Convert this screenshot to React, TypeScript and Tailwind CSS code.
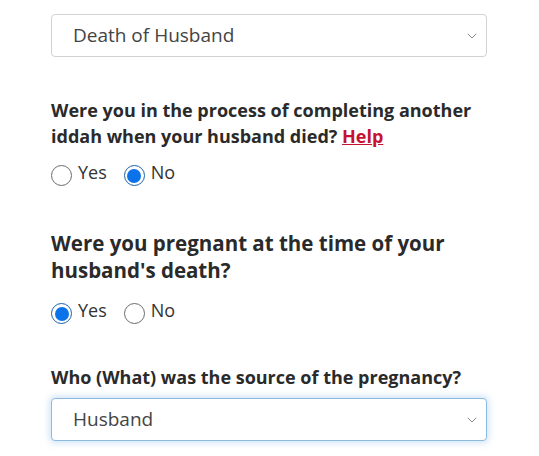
import { ChevronDown } from "lucide-react";

function Select({ value, focused }: { value: string; focused?: boolean }) {
  return (
    <div
      className={`flex h-[43px] w-[436px] items-center justify-between rounded-[4px] border bg-white pl-[21px] pr-[6px] ${
        focused
          ? "border-[#8dbbe0] shadow-[0_0_6px_2px_rgba(120,180,230,0.35)]"
          : "border-[#d2d2d2]"
      }`}
    >
      <span className="text-[19px] text-[#444]">{value}</span>
      <ChevronDown size={16} strokeWidth={1.3} className="text-[#777]" />
    </div>
  );
}

function Radio({ label, checked }: { label: string; checked?: boolean }) {
  return (
    <label className="flex items-start gap-[6px]">
      {checked ? (
        <span className="mt-[5px] flex h-[21px] w-[21px] items-center justify-center rounded-full border-[1.5px] border-[#1d5fa8] bg-white">
          <span className="h-[14px] w-[14px] rounded-full bg-[#0c72ea]" />
        </span>
      ) : (
        <span className="mt-[5px] h-[21px] w-[21px] rounded-full border border-[#6b6b6b] bg-white" />
      )}
      <span className="text-[18px] leading-6 text-[#333]">{label}</span>
    </label>
  );
}

export default function App() {
  return (
    <div className="h-[456px] w-[539px] overflow-hidden bg-white font-['Open_Sans',sans-serif]">
      <div className="flex flex-col pl-[51px]">
        <div className="-mt-[22px] text-[18px] font-bold leading-[26px] text-[#2a2a2a]">
          Reason for iddah
        </div>
        <div className="mt-[10px]">
          <Select value="Death of Husband" />
        </div>

        <p className="mt-[40px] w-[440px] text-[18px] font-bold leading-[26px] text-[#2a2a2a]">
          Were you in the process of completing another iddah when your husband died?{" "}
          <a className="text-[#c41230] underline">Help</a>
        </p>
        <div className="mt-[11px] flex gap-[17px]">
          <Radio label="Yes" />
          <Radio label="No" checked />
        </div>

        <p className="mt-[44px] w-[440px] text-[20.5px] font-bold leading-[27px] text-[#2a2a2a]">
          Were you pregnant at the time of your husband's death?
        </p>
        <div className="mt-[14px] flex gap-[17px]">
          <Radio label="Yes" checked />
          <Radio label="No" />
        </div>

        <p className="mt-[40px] text-[18px] font-bold leading-[26px] text-[#2a2a2a]">
          Who (What) was the source of the pregnancy?
        </p>
        <div className="mt-[8px]">
          <Select value="Husband" focused />
        </div>
      </div>
    </div>
  );
}
